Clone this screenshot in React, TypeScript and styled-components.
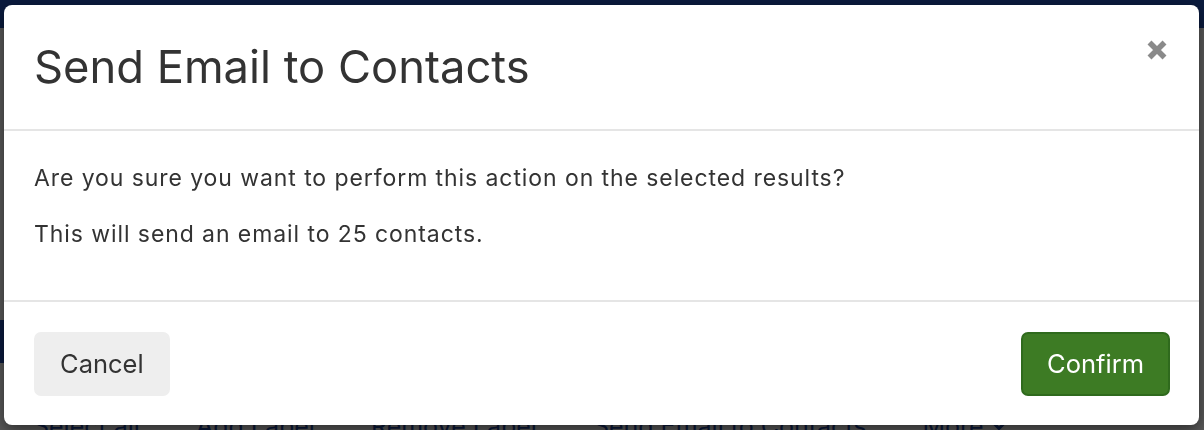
import React from "react";
import styled, { createGlobalStyle } from "styled-components";

const GlobalStyle = createGlobalStyle`
  html, body { margin: 0; padding: 0; }
  body {
    width: 1204px;
    height: 430px;
    overflow: hidden;
    background: #ffffff;
    font-family: Inter, "Liberation Sans", Arial, sans-serif;
  }
`;

const Page = styled.div`
  width: 1204px;
  height: 430px;
  display: flex;
  flex-direction: column;
  background: #ffffff;
`;

const NavBar = styled.div`
  height: 28px;
  background: #1f4db1;
  flex-shrink: 0;
`;

const PageBody = styled.div`
  flex: 1;
  display: flex;
  flex-direction: column;
  padding: 292px 0 0 0;
`;

const SideTab = styled.div`
  width: 40px;
  height: 43px;
  background: #1f4db1;
  margin-left: -36px;
`;

const Toolbar = styled.div`
  display: flex;
  gap: 56px;
  padding: 48px 0 0 33px;
  font-size: 25px;
  color: #1f4aa6;
`;

const ToolbarLink = styled.span`
  white-space: nowrap;
  display: inline-flex;
  align-items: center;
  gap: 8px;
`;

const Overlay = styled.div`
  position: fixed;
  inset: 0;
  background: rgba(0, 0, 0, 0.65);
`;

const Modal = styled.div`
  position: fixed;
  top: 5px;
  left: 4px;
  width: 1195px;
  height: 420px;
  background: #ffffff;
  border-radius: 8px;
  box-shadow: 0 5px 15px rgba(0, 0, 0, 0.5);
  display: flex;
  flex-direction: column;
  color: #333333;
  overflow: hidden;
`;

const Header = styled.div`
  height: 124px;
  flex-shrink: 0;
  display: flex;
  align-items: center;
  justify-content: space-between;
  padding: 0 30px;
  border-bottom: 2px solid #e5e5e5;
`;

const Title = styled.h4`
  margin: 0;
  font-size: 45.3px;
  font-weight: 400;
  line-height: 1.1;
  color: #333333;
`;

const CloseButton = styled.button`
  border: none;
  background: none;
  padding: 0;
  margin: -34px 2px 0 0;
  width: 20px;
  height: 20px;
  display: flex;
  cursor: pointer;
`;

const Body = styled.div`
  flex: 1;
  padding: 31px 30px 0 30px;
  border-bottom: 2px solid #e5e5e5;
`;

const Para = styled.p`
  margin: 0 0 24px 0;
  font-size: 23px;
  line-height: 32px;
  letter-spacing: 0.92px;
`;

const Footer = styled.div`
  height: 123px;
  flex-shrink: 0;
  display: flex;
  align-items: center;
  justify-content: space-between;
  padding: 0 29px 0 30px;
`;

const Button = styled.button<{ $primary?: boolean }>`
  height: 64px;
  padding: 0 24px;
  border-radius: 7px;
  font-family: inherit;
  font-size: 25.5px;
  cursor: pointer;
  border: 2px solid ${(p) => (p.$primary ? "#2f6a1d" : "#eeeeee")};
  background: ${(p) => (p.$primary ? "#3d7b24" : "#eeeeee")};
  color: ${(p) => (p.$primary ? "#ffffff" : "#333333")};
`;

const CloseIcon = () => (
  <svg width="20" height="20" viewBox="0 0 20 20">
    <path d="M2.5 2.5 L17.5 17.5 M17.5 2.5 L2.5 17.5" stroke="#8a8a8a" strokeWidth="5.6" strokeLinecap="butt" />
  </svg>
);

const Chevron = () => (
  <svg width="14" height="10" viewBox="0 0 14 10">
    <path d="M1.5 2 L7 7.5 L12.5 2" stroke="#1f4aa6" strokeWidth="3" fill="none" />
  </svg>
);

export default function App() {
  return (
    <>
      <GlobalStyle />
      <Page>
        <NavBar />
        <PageBody>
          <SideTab />
          <Toolbar>
            <ToolbarLink>Select all</ToolbarLink>
            <ToolbarLink>Add Label</ToolbarLink>
            <ToolbarLink>Remove Label</ToolbarLink>
            <ToolbarLink>Send Email to Contacts</ToolbarLink>
            <ToolbarLink>
              More <Chevron />
            </ToolbarLink>
          </Toolbar>
        </PageBody>
      </Page>
      <Overlay />
      <Modal>
        <Header>
          <Title>Send Email to Contacts</Title>
          <CloseButton aria-label="Close">
            <CloseIcon />
          </CloseButton>
        </Header>
        <Body>
          <Para>Are you sure you want to perform this action on the selected results?</Para>
          <Para>This will send an email to 25 contacts.</Para>
        </Body>
        <Footer>
          <Button>Cancel</Button>
          <Button $primary>Confirm</Button>
        </Footer>
      </Modal>
    </>
  );
}
